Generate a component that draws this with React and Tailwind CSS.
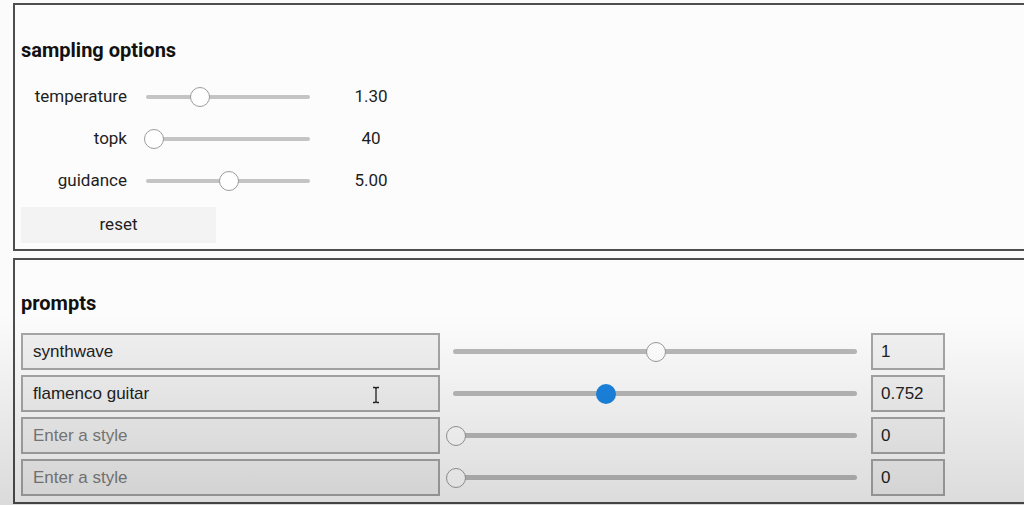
import { useState } from 'react'

const sampling = [
  { label: 'temperature', pos: 54, value: '1.30' },
  { label: 'topk', pos: 8, value: '40' },
  { label: 'guidance', pos: 83, value: '5.00' },
]

const initialPrompts = [
  { text: 'synthwave', weight: 1, active: false },
  { text: 'flamenco guitar', weight: 0.752, active: true },
  { text: '', weight: 0, active: false },
  { text: '', weight: 0, active: false },
]

function SmallSlider({ pos }) {
  return (
    <div className="relative h-[4px] w-[164px] rounded-full bg-[#c4c4c4]">
      <div
        className="absolute top-1/2 h-[20px] w-[20px] -translate-x-1/2 -translate-y-1/2 rounded-full border border-[#9c9c9c] bg-white"
        style={{ left: pos }}
      />
    </div>
  )
}

function WeightSlider({ weight, active }) {
  return (
    <div className="relative h-[5px] w-[404px] rounded-full bg-[#b9b9b9]">
      <div
        className={
          active
            ? 'absolute top-1/2 h-[20px] w-[20px] -translate-x-1/2 -translate-y-1/2 rounded-full bg-[#1b84e2]'
            : 'absolute top-1/2 h-[20px] w-[20px] -translate-x-1/2 -translate-y-1/2 rounded-full border border-[#9a9a9a] bg-white'
        }
        style={{ left: 3 + (weight / 2) * 400 }}
      />
    </div>
  )
}

export default function App() {
  const [prompts] = useState(initialPrompts)

  return (
    <div className="relative h-[505px] w-[1024px] overflow-hidden bg-[#fbfbfb] font-['Roboto',sans-serif] text-[#1e1e1e]">
      <div className="flex flex-col gap-[7px] pl-[13px] pt-[3px]">
        {/* sampling options */}
        <div className="h-[248px] w-[1030px] border-2 border-[#4e4e4e] bg-[#fcfcfc] pl-[6px] pt-[33px]">
          <h2 className="h-[24px] text-[20px] font-bold leading-[24px] text-[#111]">sampling options</h2>
          <div className="mt-[14px] flex flex-col">
            {sampling.map(s => (
              <div key={s.label} className="flex h-[42px] items-center">
                <span className="w-[106px] text-right text-[17px]">{s.label}</span>
                <div className="ml-[19px]">
                  <SmallSlider pos={s.pos} />
                </div>
                <span className="w-[122px] text-center text-[17px]">{s.value}</span>
              </div>
            ))}
          </div>
          <button className="mt-[5px] h-[36px] w-[195px] bg-[#f3f3f3] text-[17px] text-[#1e1e1e]">reset</button>
        </div>

        {/* prompts */}
        <div className="h-[246px] w-[1030px] border-2 border-[#4e4e4e] bg-[#fcfcfc] pl-[6px] pt-[31px]">
          <h2 className="h-[24px] text-[20px] font-bold leading-[24px] text-[#111]">prompts</h2>
          <div className="mt-[18px] flex flex-col gap-[5px] font-['Liberation_Sans',Arial,sans-serif]">
            {prompts.map((p, i) => (
              <div key={i} className="flex h-[37px] items-center">
                <div className="flex h-full w-[419px] items-center border-2 border-[#a6a6a6] bg-[#f1f1f1] pl-[10px] text-[17px]">
                  {p.text ? (
                    <span className="text-[#222]">{p.text}</span>
                  ) : (
                    <span className="text-[#7d7d7d]">Enter a style</span>
                  )}
                </div>
                <div className="ml-[13px]">
                  <WeightSlider weight={p.weight} active={p.active} />
                </div>
                <div className="ml-[14px] flex h-full w-[74px] items-center border-2 border-[#a6a6a6] bg-[#f2f2f2] pl-[8px] text-[17px] text-[#222]">
                  {String(p.weight)}
                </div>
              </div>
            ))}
          </div>
        </div>
      </div>

      {/* text cursor */}
      <svg className="pointer-events-none absolute left-[372px] top-[386px]" width="8" height="18" viewBox="0 0 8 18">
        <path d="M1 1.5h2l1 1 1-1h2M4 2.5v13M1 16.5h2l1-1 1 1h2" fill="none" stroke="#222" strokeWidth="1.3" />
      </svg>

      {/* video bottom shade */}
      <div className="pointer-events-none absolute inset-x-0 bottom-0 h-[190px] bg-gradient-to-b from-transparent to-black/[0.13]" />
    </div>
  )
}
